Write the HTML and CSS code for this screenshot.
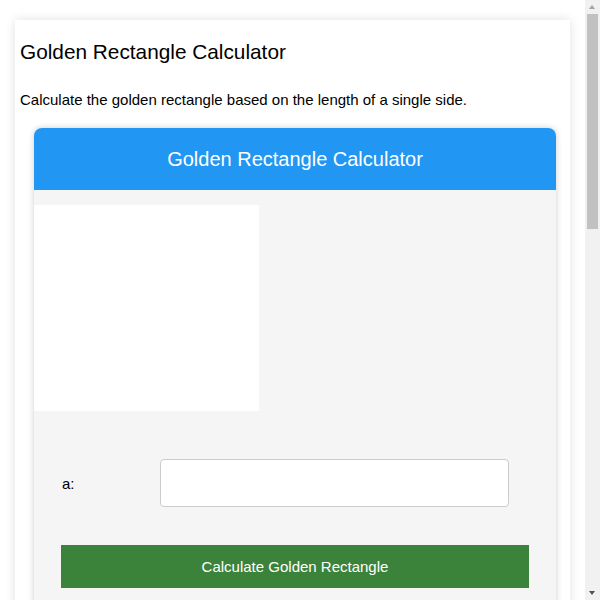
FILE: index.html
```html
<!DOCTYPE html>
<html>
<head>
<meta charset="utf-8">
<link rel="stylesheet" href="styles.css">
</head>
<body>
<div class="page">
  <h1 class="title">Golden Rectangle Calculator</h1>
  <p class="intro">Calculate the golden rectangle based on the length of a single side.</p>
  <div class="calc">
    <div class="calc-head">Golden Rectangle Calculator</div>
    <div class="calc-body">
      <div class="canvas"></div>
      <div class="field">
        <label class="field-label">a:</label>
        <input class="field-input" type="text">
      </div>
      <button class="calc-btn">Calculate Golden Rectangle</button>
      <div class="results"></div>
    </div>
  </div>
</div>
<div class="scrollbar" aria-hidden="true">
  <div class="sb-up"></div>
  <div class="sb-thumb"></div>
  <div class="sb-down"></div>
</div>
</body>
</html>
```
FILE: styles.css
```css
html, body {
  margin: 0;
  padding: 0;
  background: #fff;
  font-family: "Liberation Sans", Arial, sans-serif;
  color: #000;
}
.page {
  margin: 20px 30px 20px 15px;
  padding: 1px 5px 20px 5px;
  background: #fff;
  box-shadow: 0 0 10px rgba(0,0,0,0.12);
}
.title {
  font-size: 20.8px;
  font-weight: normal;
  margin: 19px 0 0 0;
  line-height: 24px;
}
.intro {
  font-size: 15px;
  margin: 27px 0 0 0;
  line-height: 18px;
}
.calc {
  margin: 19px 9px 0 14px;
  border-radius: 8px;
  overflow: hidden;
  box-shadow: 0 0 6px rgba(0,0,0,0.2);
  background: #f5f5f5;
}
.calc-head {
  background: #2196F3;
  color: #fff;
  text-align: center;
  font-size: 20px;
  height: 62px;
  line-height: 62px;
}
.calc-body {
  padding: 15px 27px 0 27px;
}
.canvas {
  width: 225px;
  height: 206px;
  background: #fff;
  margin-left: -27px;
}
.field {
  display: flex;
  align-items: center;
  margin-top: 48px;
}
.field-label {
  font-size: 15px;
  width: 98px;
  padding-left: 1px;
}
.field-input {
  width: 349px;
  height: 48px;
  box-sizing: border-box;
  border: 1px solid #ccc;
  border-radius: 4px;
  background: #fff;
  font-size: 15px;
}
.calc-btn {
  display: block;
  width: 100%;
  height: 43px;
  margin-top: 38px;
  border: none;
  background: #3B823B;
  color: #fff;
  font-family: "Liberation Sans", Arial, sans-serif;
  font-size: 15px;
}
.results {
  height: 1000px;
}
.scrollbar {
  position: fixed;
  top: 0;
  right: 0;
  width: 15px;
  height: 100%;
  background: #f1f1f1;
}
.sb-up {
  position: absolute;
  top: 5px;
  left: 4px;
  width: 0;
  height: 0;
  border-left: 3.5px solid transparent;
  border-right: 3.5px solid transparent;
  border-bottom: 4px solid #a3a3a3;
}
.sb-thumb {
  position: absolute;
  top: 14px;
  left: 2px;
  width: 11px;
  height: 215px;
  background: #c1c1c1;
}
.sb-down {
  position: absolute;
  bottom: 5px;
  left: 4px;
  width: 0;
  height: 0;
  border-left: 3.5px solid transparent;
  border-right: 3.5px solid transparent;
  border-top: 4px solid #505050;
}
```
